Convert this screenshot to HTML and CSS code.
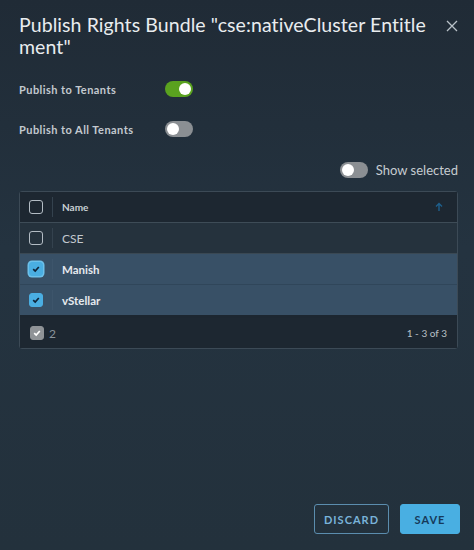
FILE: index.html
```html
<!DOCTYPE html>
<html>
<head>
<meta charset="utf-8">
<link rel="stylesheet" href="styles.css">
</head>
<body>
<div class="modal">
  <div class="header">
    <h1 class="title">Publish Rights Bundle "cse:nativeCluster Entitlement"</h1>
    <span class="close">
      <svg width="12" height="12" viewBox="0 0 12 12"><path d="M1 1L11 11M11 1L1 11" stroke="#b9c1c8" stroke-width="1.3" fill="none"/></svg>
    </span>
  </div>

  <div class="field">
    <span class="label">Publish to Tenants</span>
    <span class="toggle on"><span class="knob"></span></span>
  </div>
  <div class="field">
    <span class="label">Publish to All Tenants</span>
    <span class="toggle"><span class="knob"></span></span>
  </div>

  <div class="show-row">
    <span class="toggle"><span class="knob"></span></span>
    <span class="show-label">Show selected</span>
  </div>

  <div class="grid">
    <div class="row head">
      <div class="cell-check"><span class="cb"></span></div>
      <div class="cell-name">Name</div>
      <div class="sort">
        <svg width="8" height="10" viewBox="0 0 8 10"><path d="M4 9V1.5M1 4.5L4 1.5L7 4.5" stroke="#1e5f8c" stroke-width="1.4" fill="none"/></svg>
      </div>
    </div>
    <div class="row">
      <div class="cell-check"><span class="cb"></span></div>
      <div class="cell-name plain">CSE</div>
    </div>
    <div class="row selected">
      <div class="cell-check"><span class="cb checked focus"><svg width="10" height="10" viewBox="0 0 10 10"><path d="M2.2 5.2L4.2 7.1L7.8 3" stroke="#0e2338" stroke-width="1.7" fill="none"/></svg></span></div>
      <div class="cell-name">Manish</div>
    </div>
    <div class="row selected last">
      <div class="cell-check"><span class="cb checked"><svg width="10" height="10" viewBox="0 0 10 10"><path d="M2.2 5.2L4.2 7.1L7.8 3" stroke="#0e2338" stroke-width="1.7" fill="none"/></svg></span></div>
      <div class="cell-name">vStellar</div>
    </div>
    <div class="foot">
      <span class="cb grey"><svg width="10" height="10" viewBox="0 0 10 10"><path d="M2.2 5.2L4.2 7.1L7.8 3" stroke="#ffffff" stroke-width="1.7" fill="none"/></svg></span>
      <span class="count">2</span>
      <span class="pages">1 - 3 of 3</span>
    </div>
  </div>

  <div class="actions">
    <button class="btn outline">DISCARD</button>
    <button class="btn solid">SAVE</button>
  </div>
</div>
</body>
</html>
```

FILE: styles.css
```css
html, body {
  margin: 0;
  padding: 0;
}
body {
  width: 474px;
  height: 550px;
  background: linear-gradient(180deg, #202b36 0%, #243340 45%, #23313c 100%);
  font-family: "Lato", "Open Sans", sans-serif;
  color: #dfe3e7;
  overflow: hidden;
}
.modal {
  height: 550px;
  box-sizing: border-box;
  display: flex;
  flex-direction: column;
  padding: 14px 14px 16px 19px;
}
.header {
  display: flex;
  align-items: flex-start;
}
.title {
  margin: 0;
  width: 414px;
  font-size: 19.5px;
  line-height: 22px;
  font-weight: 400;
  letter-spacing: 0.08px;
  color: #e9ecef;
  word-break: break-all;
}
.close {
  margin-left: auto;
  margin-top: 6px;
  margin-right: 2px;
  display: flex;
}
.field {
  display: flex;
  align-items: center;
  height: 16px;
  margin-top: 23px;
}
.field + .field {
  margin-top: 24px;
}
.label {
  width: 146px;
  font-size: 11px;
  font-weight: 700;
  letter-spacing: 0.45px;
  color: #c3c9cf;
}
.toggle {
  position: relative;
  width: 28px;
  height: 16px;
  border-radius: 8px;
  background: #8b8f93;
  display: inline-block;
  flex: none;
}
.toggle .knob {
  position: absolute;
  top: 2px;
  left: 2px;
  width: 12px;
  height: 12px;
  border-radius: 50%;
  background: #ffffff;
}
.toggle.on {
  background: #5aa21f;
}
.toggle.on .knob {
  left: 14px;
}
.show-row {
  display: flex;
  align-items: center;
  justify-content: flex-end;
  height: 16px;
  margin-top: 25px;
  margin-right: 2px;
}
.show-label {
  margin-left: 8px;
  font-size: 13px;
  color: #c6ccd1;
}
.grid {
  margin-top: 13px;
  margin-right: 2px;
  border: 1px solid #3c4a56;
  border-radius: 3px;
  background: #1e2933;
}
.row {
  display: flex;
  align-items: center;
  height: 30px;
  border-bottom: 1px solid #3a4853;
  background: #25323d;
}
.row.head {
  background: #1d2731;
  border-bottom: 1px solid #3e4c57;
}
.row.selected {
  background: #385066;
  border-bottom: 1px solid #30465a;
}
.row.last {
  border-bottom: 3px solid #1c2630;
}
.cell-check {
  width: 32px;
  height: 20px;
  display: flex;
  align-items: center;
  justify-content: center;
  border-right: 1px solid #34424e;
}
.row.selected .cell-check {
  border-right: 1px solid #3d556b;
}
.cell-name {
  padding-left: 9px;
  font-size: 11.5px;
  font-weight: 700;
  color: #e6eaee;
  flex: 1;
}
.row.head .cell-name {
  font-size: 10px;
  color: #c9cfd4;
}
.cell-name.plain {
  font-weight: 400;
  color: #c2c8ce;
  font-size: 12px;
}
.sort {
  width: 24px;
  display: flex;
  justify-content: center;
  margin-right: 6px;
}
.cb {
  width: 12px;
  height: 12px;
  border: 1.5px solid #b3bcc4;
  border-radius: 3px;
  display: flex;
  align-items: center;
  justify-content: center;
  box-sizing: content-box;
}
.cb.checked {
  background: #4aaee2;
  border-color: #4aaee2;
}
.cb.focus {
  box-shadow: 0 0 0 1.5px #6cc0ea;
}
.cb.grey {
  background: #8f9397;
  border-color: #8f9397;
}
.foot {
  display: flex;
  align-items: center;
  height: 30px;
  padding: 0 10px 0 10px;
  background: #1d2731;
  font-size: 11px;
}
.count {
  margin-left: 5px;
  color: #8a939b;
  font-size: 12px;
}
.pages {
  margin-left: auto;
  color: #b9c0c6;
  font-size: 10px;
}
.actions {
  margin-top: auto;
  display: flex;
  justify-content: flex-end;
  gap: 11px;
}
.btn {
  height: 30px;
  font-family: "Lato", "Open Sans", sans-serif;
  font-size: 11px;
  font-weight: 700;
  letter-spacing: 1px;
  border-radius: 3px;
  padding: 0;
  cursor: pointer;
}
.btn.outline {
  width: 75px;
  background: transparent;
  border: 1px solid #5b8dae;
  color: #79b3d9;
}
.btn.solid {
  width: 60px;
  background: #49afe2;
  border: 1px solid #49afe2;
  color: #163a5a;
}
```
